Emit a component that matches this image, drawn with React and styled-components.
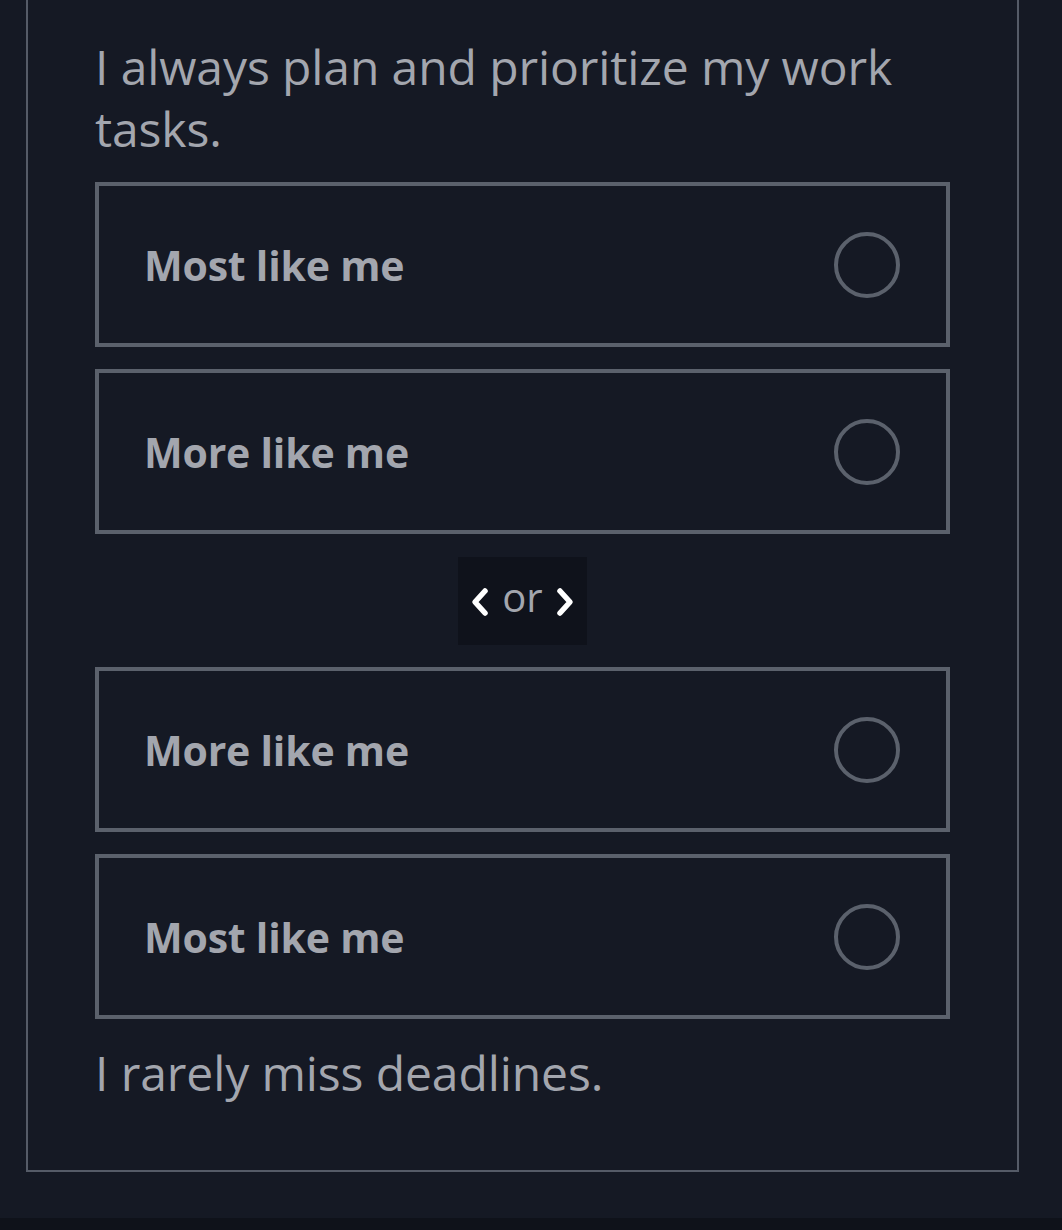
import React, { useState } from "react";
import styled, { createGlobalStyle } from "styled-components";

const GlobalStyle = createGlobalStyle`
    html, body {
        margin: 0;
        padding: 0;
        background: #151924;
    }
    body {
        font-family: "Open Sans", "Noto Sans", sans-serif;
    }
`;

const Page = styled.div`
    width: 1062px;
    height: 1230px;
    display: flex;
    flex-direction: column;
    background: #151924;
    overflow: hidden;
`;

const Card = styled.div`
    margin: 0 43px 0 26px;
    border: 2px solid #555b67;
    border-top: none;
    padding: 36px 67px 66px 67px;
    display: flex;
    flex-direction: column;
`;

const Statement = styled.p`
    margin: 0;
    color: #a3a6ae;
    font-size: 48px;
    line-height: 62px;
    letter-spacing: -0.1px;
`;

const Options = styled.div`
    display: flex;
    flex-direction: column;
    gap: 22px;
    margin: ${(p) => (p.$first ? "22px 0 0" : "0 0 23px")};
`;

const Option = styled.label`
    height: 165px;
    box-sizing: border-box;
    border: 4px solid #5b616c;
    display: flex;
    align-items: center;
    justify-content: space-between;
    padding: 0 46px 0 45px;
    cursor: pointer;
`;

const OptionLabel = styled.span`
    color: #a3a6ae;
    font-weight: 700;
    font-size: 41px;
    letter-spacing: -0.2px;
`;

const Radio = styled.span`
    width: 66px;
    height: 66px;
    box-sizing: border-box;
    border-radius: 50%;
    border: 4px solid ${(p) => (p.$checked ? "#a3a6ae" : "#5b616c")};
    display: flex;
    align-items: center;
    justify-content: center;
    &::after {
        content: "";
        width: 34px;
        height: 34px;
        border-radius: 50%;
        background: ${(p) => (p.$checked ? "#a3a6ae" : "transparent")};
    }
`;

const Divider = styled.div`
    display: flex;
    justify-content: center;
    margin: 23px 0 22px;
`;

const OrBadge = styled.div`
    width: 129px;
    height: 88px;
    background: #0f121b;
    display: flex;
    align-items: center;
    justify-content: center;
    gap: 12px;
    color: #a3a6ae;
    font-size: 40px;
    line-height: 1;
    padding-bottom: 8px;
    box-sizing: border-box;
`;

const Chevron = ({ dir }) => (
    <svg width="20" height="32" viewBox="0 0 20 32" style={{ marginTop: 10 }}>
        <path
            d={dir === "left" ? "M15 5 L5 16 L15 27" : "M5 5 L15 16 L5 27"}
            fill="none"
            stroke="#ffffff"
            strokeWidth="5.5"
            strokeLinecap="round"
            strokeLinejoin="round"
        />
    </svg>
);

const Footer = styled.div`
    margin-top: 46px;
    flex: 1;
    background: #0f121a;
`;

function Choice({ label, checked, onPick }) {
    return (
        <Option onClick={onPick}>
            <OptionLabel>{label}</OptionLabel>
            <Radio $checked={checked} />
        </Option>
    );
}

export default function App() {
    const [picked, setPicked] = useState(null);

    return (
        <Page>
            <GlobalStyle />
            <Card>
                <Statement>I always plan and prioritize my work tasks.</Statement>
                <Options $first>
                    <Choice label="Most like me" checked={picked === "a1"} onPick={() => setPicked("a1")} />
                    <Choice label="More like me" checked={picked === "a2"} onPick={() => setPicked("a2")} />
                </Options>
                <Divider>
                    <OrBadge>
                        <Chevron dir="left" />
                        or
                        <Chevron dir="right" />
                    </OrBadge>
                </Divider>
                <Options>
                    <Choice label="More like me" checked={picked === "b2"} onPick={() => setPicked("b2")} />
                    <Choice label="Most like me" checked={picked === "b1"} onPick={() => setPicked("b1")} />
                </Options>
                <Statement>I rarely miss deadlines.</Statement>
            </Card>
            <Footer />
        </Page>
    );
}
